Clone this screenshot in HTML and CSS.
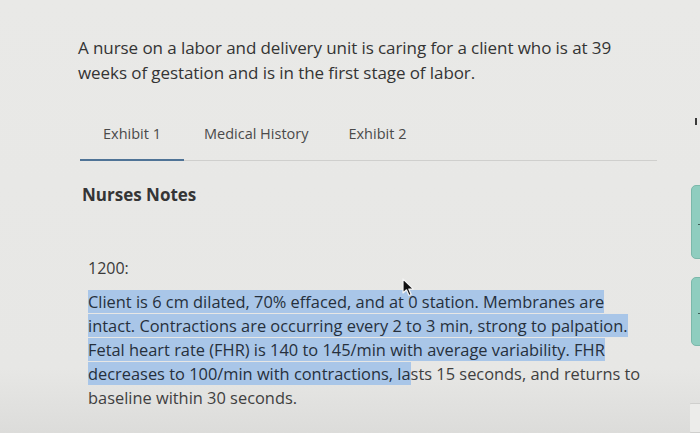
FILE: index.html
```html
<!DOCTYPE html>
<html lang="en">
<head>
<meta charset="utf-8">
<title>Nurses Notes</title>
<link rel="stylesheet" href="styles.css">
</head>
<body>
<div class="page">
  <main class="main">
    <p class="question">A nurse on a labor and delivery unit is caring for a client who is at 39 weeks of gestation and is in the first stage of labor.</p>
    <nav class="tabs">
      <span class="tab active">Exhibit 1</span>
      <span class="tab">Medical History</span>
      <span class="tab">Exhibit 2</span>
    </nav>
    <h2 class="notes-title">Nurses Notes</h2>
    <p class="time">1200:</p>
    <p class="note"><span class="sel">Client is 6 cm dilated, 70% effaced, and at 0 station. Membranes are<br>intact. Contractions are occurring every 2 to 3 min, strong to palpation.<br>Fetal heart rate (FHR) is 140 to 145/min with average variability. FHR<br>decreases to 100/min with contractions, la</span>sts 15 seconds, and returns to<br>baseline within 30 seconds.</p>
    <svg class="cursor" width="14" height="20" viewBox="0 0 14 20" aria-hidden="true">
      <path d="M1 1 L1 15 L4.5 11.8 L7 17.5 L9.2 16.5 L6.8 11 L11.5 11 Z" fill="#111" stroke="#f4f4f4" stroke-width="1.2" stroke-linejoin="round"/>
    </svg>
  </main>
  <aside class="side">
    <span class="side-mark"></span>
    <span class="side-btn first"><i></i></span>
    <span class="side-btn second"><i></i></span>
    <span class="side-box"></span>
  </aside>
</div>
</body>
</html>
```
FILE: styles.css
```css
html, body {
  margin: 0;
  padding: 0;
}
body {
  width: 700px;
  height: 433px;
  overflow: hidden;
  background: linear-gradient(180deg, #e9e9e7 0%, #e7e7e5 85%, #dcdcda 100%);
  font-family: "Open Sans", "Liberation Sans", sans-serif;
  color: #3b3b3b;
}
.page {
  display: flex;
  height: 433px;
}
.main {
  position: relative;
  width: 690px;
  flex: none;
}
.question {
  margin: 35px 0 0 78px;
  width: 560px;
  font-size: 17px;
  line-height: 25px;
  letter-spacing: -0.08px;
  color: #343434;
}
.tabs {
  display: flex;
  margin: 39px 0 0 80px;
  width: 577px;
  border-bottom: 1px solid #cfcfcd;
}
.tab {
  padding: 0 20px 15px;
  font-size: 14.5px;
  line-height: 20px;
  color: #4a4a4a;
}
.tab.active {
  padding-left: 23px;
  padding-right: 23px;
  border-bottom: 2px solid #4f7396;
  margin-bottom: -1px;
}
.notes-title {
  margin: 23px 0 0 82px;
  font-size: 17px;
  line-height: 22px;
  font-weight: 700;
  color: #353535;
}
.time {
  margin: 50px 0 0 88px;
  font-size: 16px;
  line-height: 24px;
  color: #3a3a3a;
}
.note {
  margin: 10px 0 0 88px;
  font-size: 16.4px;
  line-height: 24px;
  color: #3f3f3f;
}
.sel {
  background: #a9c6e8;
  color: #26303c;
}
.cursor {
  position: absolute;
  left: 402px;
  top: 278px;
}
.side {
  width: 10px;
  flex: none;
  overflow: hidden;
  display: flex;
  flex-direction: column;
}
.side-mark {
  display: block;
  margin: 118px 0 0 5px;
  width: 2px;
  height: 8px;
  background: #3a3a3a;
}
.side-btn {
  display: block;
  margin-left: 1px;
  width: 30px;
  height: 77px;
  border: 1px solid #7bb8aa;
  border-radius: 5px;
  background: #8fcdbf;
  position: relative;
}
.side-btn i {
  display: block;
  margin: 38px 0 0 6px;
  width: 3px;
  height: 1px;
  background: #3f5f58;
}
.side-btn.first {
  margin-top: 60px;
}
.side-btn.second {
  margin-top: 18px;
  height: 72px;
}
.side-btn.second i {
  margin-top: 35px;
}
.side-box {
  display: block;
  margin: 57px 0 0 -2px;
  width: 30px;
  height: 30px;
  border: 1px solid #cfcfcd;
  border-radius: 3px;
  background: #ececea;
}
```
